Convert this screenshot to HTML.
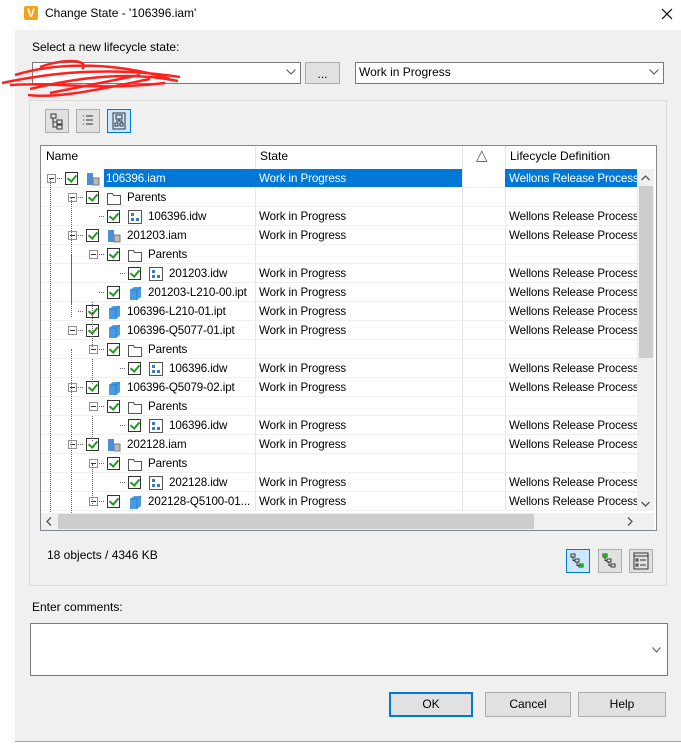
<!DOCTYPE html>
<html><head><meta charset="utf-8"><style>
*{box-sizing:border-box}
body{margin:0;width:681px;height:744px;background:#fff;font-family:"Liberation Sans",sans-serif;font-size:12px;color:#000;position:relative;overflow:hidden}
.a{position:absolute}
.t{position:absolute;white-space:nowrap;line-height:19px}
.r{font-size:11.6px;letter-spacing:-0.1px}
.btn{position:absolute;background:#e1e1e1;border:1px solid #adadad;text-align:center;line-height:22px}
.cb{position:absolute;width:13px;height:13px;border:1px solid #333;background:#fff}
.cb:after{content:"";position:absolute;left:3px;top:0px;width:4px;height:7px;border:solid #1f9a1f;border-width:0 2px 2px 0;transform:rotate(40deg)}
.ex{position:absolute;width:9px;height:9px;border:1px solid #919191;background:#fff}
.ex:after{content:"";position:absolute;left:1px;top:3px;width:5px;height:1px;background:#333}
.tb{position:absolute;width:24px;height:24px;border:1px solid #adadad;background:#e1e1e1}
</style></head><body>
<div class="a" style="left:24px;top:6px;width:14px;height:14px;background:#f2a21b;border-radius:2px;color:#fff;font-weight:bold;font-size:12px;line-height:14px;text-align:center">V</div>
<div class="t" style="left:45px;top:4px">Change State - '106396.iam'</div>
<svg class="a" style="left:661px;top:8px" width="12" height="12"><path d="M1 1L11 11M11 1L1 11" stroke="#000" stroke-width="1.2"/></svg>
<div class="a" style="left:15px;top:30px;width:666px;height:712px;background:#f0f0f0"></div>
<div class="a" style="left:15px;top:741px;width:666px;height:1px;background:#a0a0a0"></div>
<div class="t" style="left:32px;top:38px">Select a new lifecycle state:</div>
<div class="a" style="left:32px;top:62px;width:269px;height:22px;background:#fff;border:1px solid #7a7a7a"></div>
<svg class="a" style="left:286px;top:69px" width="10" height="6"><path d="M0.5 0.5L5 5L9.5 0.5" stroke="#555" fill="none"/></svg>
<div class="btn" style="left:305px;top:62px;width:35px;height:22px">...</div>
<div class="a" style="left:355px;top:62px;width:309px;height:22px;background:#fff;border:1px solid #7a7a7a"></div>
<div class="t" style="left:359px;top:63px">Work in Progress</div>
<svg class="a" style="left:649px;top:69px" width="10" height="6"><path d="M0.5 0.5L5 5L9.5 0.5" stroke="#555" fill="none"/></svg>
<svg class="a" style="left:0;top:55px" width="190" height="45"><path d="M2 28 C40 20 100 10 180 22 M15 20 C60 6 120 8 170 24 M30 34 C80 22 130 16 178 26 M28 40 C60 44 110 32 150 24 M40 12 C70 2 90 6 82 14 M10 30 C60 27 100 36 165 28 M50 38 C90 30 120 24 140 20" stroke="#ff2020" stroke-width="2.5" fill="none"/></svg>
<div class="a" style="left:29px;top:100px;width:638px;height:486px;border:1px solid #dcdcdc"></div>
<div class="tb" style="left:45px;top:109px"><svg width="22" height="22"><path d="M5 4h5v4H5zM11 10h5v4h-5zM11 15h5v4h-5zM7 8v9h4M7 12h4" stroke="#333" fill="none"/></svg></div>
<div class="tb" style="left:76px;top:109px"><svg width="22" height="22"><path d="M6 6h1M6 10h1M6 14h1M9 6h7M9 10h7M9 14h7" stroke="#333" fill="none"/></svg></div>
<div class="tb" style="left:107px;top:109px;background:#cce8ff;border-color:#0078d7"><svg width="22" height="22"><path d="M5 3h12v16H5zM8 5h6v4H8zM7 13h3v3H7zM12 13h3v3h-3zM11 9v2M8 11h6v2" stroke="#333" fill="none"/></svg></div>
<div class="a" style="left:40px;top:145px;width:617px;height:386px;background:#fff;border:1px solid #828790"></div>
<div class="t" style="left:46px;top:147px">Name</div>
<div class="t" style="left:260px;top:147px">State</div>
<div class="t" style="left:476px;top:146px;font-size:15px;color:#555">△</div>
<div class="t" style="left:510px;top:147px">Lifecycle Definition</div>
<div class="a" style="left:255px;top:146px;width:1px;height:365px;background:#e5e5e5"></div>
<div class="a" style="left:462px;top:146px;width:1px;height:365px;background:#e5e5e5"></div>
<div class="a" style="left:505px;top:146px;width:1px;height:365px;background:#e5e5e5"></div>
<div id="rows"></div>
<div class="a" style="left:637px;top:169px;width:17px;height:342px;background:#f0f0f0"></div>
<div class="a" style="left:639px;top:186px;width:14px;height:172px;background:#cdcdcd"></div>
<svg class="a" style="left:641px;top:175px" width="9" height="6"><path d="M0.5 5L4.5 1L8.5 5" stroke="#555" fill="none" stroke-width="1.3"/></svg>
<svg class="a" style="left:641px;top:501px" width="9" height="6"><path d="M0.5 1L4.5 5L8.5 1" stroke="#555" fill="none" stroke-width="1.3"/></svg>
<div class="a" style="left:41px;top:513px;width:613px;height:17px;background:#f0f0f0"></div>
<div class="a" style="left:58px;top:514px;width:476px;height:15px;background:#cdcdcd"></div>
<svg class="a" style="left:46px;top:517px" width="6" height="9"><path d="M5 0.5L1 4.5L5 8.5" stroke="#555" fill="none" stroke-width="1.3"/></svg>
<svg class="a" style="left:627px;top:517px" width="6" height="9"><path d="M1 0.5L5 4.5L1 8.5" stroke="#555" fill="none" stroke-width="1.3"/></svg>
<div class="t" style="left:47px;top:546px">18 objects / 4346 KB</div>
<div class="tb" style="left:566px;top:549px;background:#cce8ff;border-color:#0078d7"><svg width="22" height="22"><path d="M4 4h4v3H4zM8 9h4v3H8zM12 14h4v3h-4zM6 7v3.5h2M10 12v3.5h2" stroke="#333" fill="none"/><rect x="12" y="14" width="4" height="3" fill="#2a2"/></svg></div>
<div class="tb" style="left:598px;top:549px"><svg width="22" height="22"><path d="M4 4h4v3H4zM8 9h4v3H8zM12 14h4v3h-4zM6 7v3.5h2M10 12v3.5h2" stroke="#333" fill="none"/><rect x="4" y="4" width="4" height="3" fill="#2a2"/></svg></div>
<div class="tb" style="left:629px;top:549px"><svg width="22" height="22"><path d="M4 3h14v16H4zM4 6h14M6 9h2v2H6zM6 14h2v2H6zM10 10h6M10 15h6" stroke="#333" fill="none"/></svg></div>
<div class="t" style="left:32px;top:598px">Enter comments:</div>
<div class="a" style="left:30px;top:623px;width:638px;height:53px;background:#fff;border:1px solid #7a7a7a"></div>
<svg class="a" style="left:652px;top:647px" width="9" height="6"><path d="M0.5 0.5L4.5 5L8.5 0.5" stroke="#555" fill="none"/></svg>
<div class="btn" style="left:389px;top:692px;width:84px;height:25px;border:2px solid #0078d7;line-height:21px">OK</div>
<div class="btn" style="left:485px;top:692px;width:86px;height:25px">Cancel</div>
<div class="btn" style="left:578px;top:692px;width:88px;height:25px">Help</div>
<script>
var R=[[0,'a','106396.iam',1],[1,'f','Parents',0],[2,'d','106396.idw',1],[1,'a','201203.iam',1],[2,'f','Parents',0],[3,'d','201203.idw',1],[2,'p','201203-L210-00.ipt',1],[1,'p','106396-L210-01.ipt',1],[1,'p','106396-Q5077-01.ipt',1],[2,'f','Parents',0],[3,'d','106396.idw',1],[1,'p','106396-Q5079-02.ipt',1],[2,'f','Parents',0],[3,'d','106396.idw',1],[1,'a','202128.iam',1],[2,'f','Parents',0],[3,'d','202128.idw',1],[2,'p','202128-Q5100-01...',1]];
var h='';
var exp={0:1,1:1,3:1,4:1,8:1,9:1,11:1,12:1,14:1,15:1,17:1};
R.forEach(function(r,i){var y=169+i*19,l=r[0],x=21*l;
h+='<div class="a" style="left:41px;top:'+(y+18)+'px;width:596px;height:1px;background:#f0f0f0"></div>';
if(i==0){h+='<div class="a" style="left:104px;top:'+y+'px;width:358px;height:18px;background:#0078d7"></div><div class="a" style="left:505px;top:'+y+'px;width:132px;height:18px;background:#0078d7"></div>';}
var c=i==0?'color:#fff;':'';
if(exp[i])h+='<div class="ex" style="left:'+(47+x)+'px;top:'+(y+5)+'px"></div>';
h+='<div class="a" style="left:'+(57+x)+'px;top:'+(y+9)+'px;width:5px;border-top:1px dotted #666"></div>';
h+='<div class="cb" style="left:'+(65+x)+'px;top:'+(y+3)+'px"></div>';
var ix=85+x,iy=y+2,ic='';
if(r[1]=='a')ic='<svg class="a" style="left:'+ix+'px;top:'+iy+'px" width="16" height="16"><rect x="2" y="2" width="6" height="12" fill="#4a90d9"/><rect x="8" y="7" width="6" height="7" fill="#bbb" stroke="#777"/></svg>';
if(r[1]=='f')ic='<svg class="a" style="left:'+ix+'px;top:'+iy+'px" width="16" height="16"><path d="M1.5 3.5h5l1 2h7v9h-13z" fill="#fff" stroke="#555"/></svg>';
if(r[1]=='d')ic='<svg class="a" style="left:'+ix+'px;top:'+iy+'px" width="16" height="16"><rect x="1.5" y="1.5" width="13" height="13" fill="#fff" stroke="#555"/><rect x="4" y="4" width="3" height="3" fill="#3a78c8"/><rect x="4" y="9" width="3" height="3" fill="#3a78c8"/><rect x="9" y="9" width="3" height="3" fill="#3a78c8"/></svg>';
if(r[1]=='p')ic='<svg class="a" style="left:'+ix+'px;top:'+iy+'px" width="16" height="16"><path d="M3 5l4-3h7v10l-4 3H3z" fill="#4a9be3"/><path d="M3 5h7v10M10 5l4-3" stroke="#2f7fcf" fill="none"/></svg>';
h+=ic;
h+='<div class="t r" style="'+c+'left:'+(106+x)+'px;top:'+y+'px">'+r[2]+'</div>';
if(r[3])h+='<div class="t r" style="'+c+'left:259px;top:'+y+'px">Work in Progress</div><div class="t r" style="'+c+'left:509px;top:'+y+'px">Wellons Release Process</div>';
});
[[50,178,340],[71,197,120],[71,254,50],[92,302,45],[92,359,25],[92,416,25],[71,349,170],[92,464,40]].forEach(function(v){h+='<div class="a" style="left:'+v[0]+'px;top:'+v[1]+'px;height:'+v[2]+'px;border-left:1px dotted #666"></div>';});
document.getElementById('rows').innerHTML=h;
</script>
</body></html>
